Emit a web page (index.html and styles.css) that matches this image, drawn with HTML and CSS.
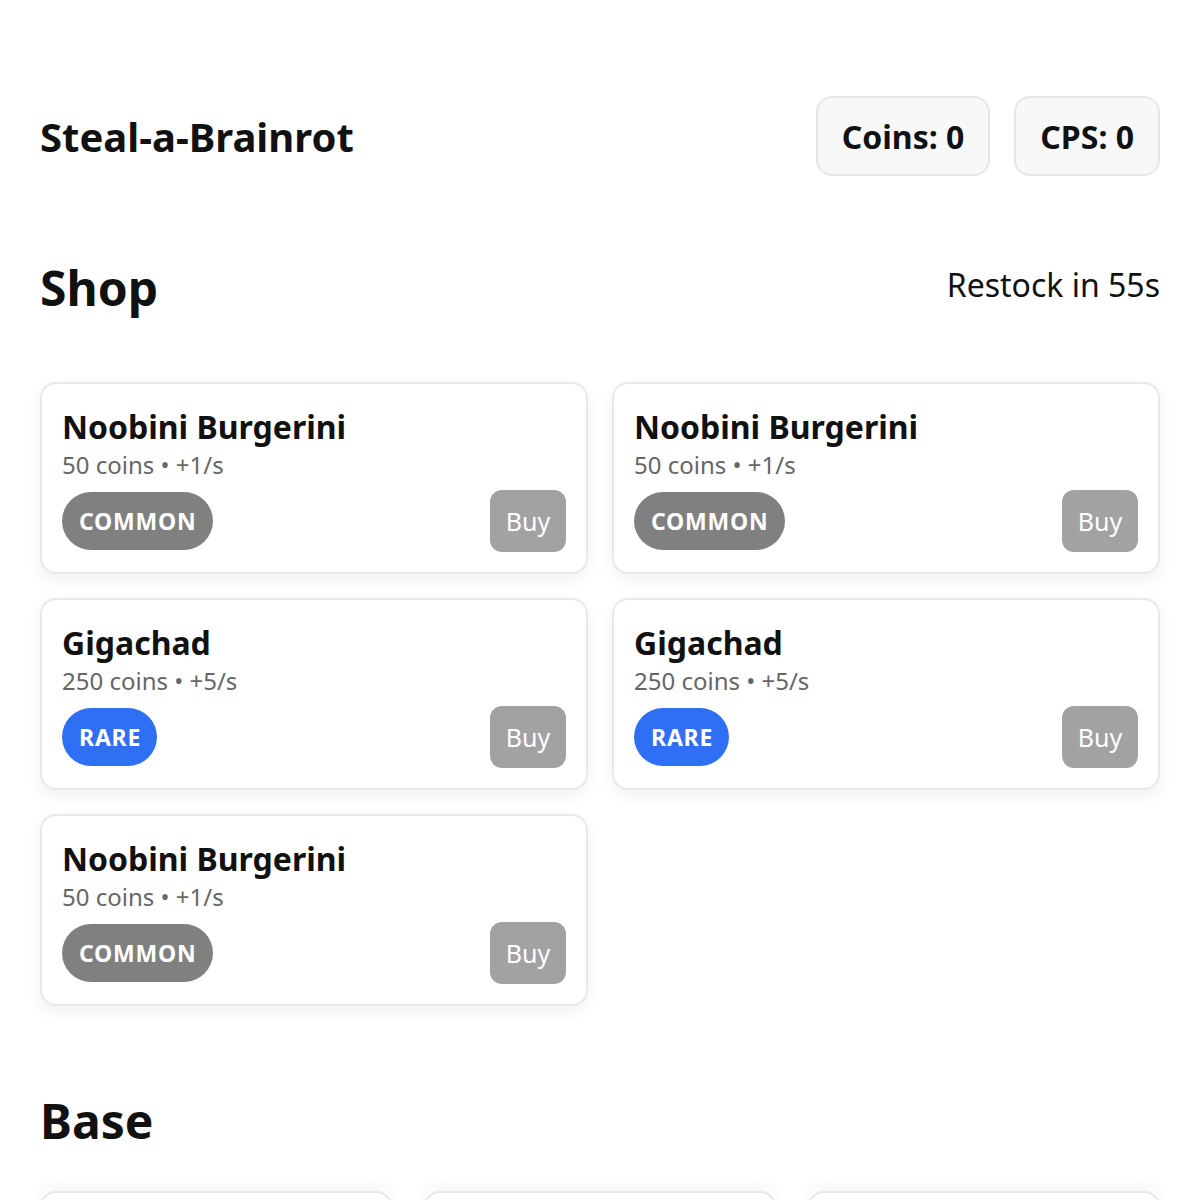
FILE: index.html
```html
<!DOCTYPE html>
<html>
<head>
<meta charset="utf-8">
<link rel="stylesheet" href="styles.css">
</head>
<body>
<div class="page">
  <header class="topbar">
    <h1 class="brand">Steal-a-Brainrot</h1>
    <div class="stats">
      <div class="stat">Coins: 0</div>
      <div class="stat">CPS: 0</div>
    </div>
  </header>

  <section class="section">
    <div class="section-head">
      <h2 class="section-title">Shop</h2>
      <div class="restock">Restock in 55s</div>
    </div>
    <div class="shop-grid">
      <div class="card">
        <div class="card-name">Noobini Burgerini</div>
        <div class="card-meta">50 coins • +1/s</div>
        <div class="card-row">
          <span class="badge badge-common">COMMON</span>
          <button class="buy">Buy</button>
        </div>
      </div>
      <div class="card">
        <div class="card-name">Noobini Burgerini</div>
        <div class="card-meta">50 coins • +1/s</div>
        <div class="card-row">
          <span class="badge badge-common">COMMON</span>
          <button class="buy">Buy</button>
        </div>
      </div>
      <div class="card">
        <div class="card-name">Gigachad</div>
        <div class="card-meta">250 coins • +5/s</div>
        <div class="card-row">
          <span class="badge badge-rare">RARE</span>
          <button class="buy">Buy</button>
        </div>
      </div>
      <div class="card">
        <div class="card-name">Gigachad</div>
        <div class="card-meta">250 coins • +5/s</div>
        <div class="card-row">
          <span class="badge badge-rare">RARE</span>
          <button class="buy">Buy</button>
        </div>
      </div>
      <div class="card">
        <div class="card-name">Noobini Burgerini</div>
        <div class="card-meta">50 coins • +1/s</div>
        <div class="card-row">
          <span class="badge badge-common">COMMON</span>
          <button class="buy">Buy</button>
        </div>
      </div>
    </div>
  </section>

  <section class="section base">
    <div class="section-head">
      <h2 class="section-title">Base</h2>
    </div>
    <div class="base-grid">
      <div class="slot"></div>
      <div class="slot"></div>
      <div class="slot"></div>
    </div>
  </section>
</div>
</body>
</html>
```

FILE: styles.css
```css
* { box-sizing: border-box; }
html, body { margin: 0; padding: 0; background: #fff; }
body {
  font-family: "Noto Sans", "Open Sans", sans-serif;
  color: #111;
}
.page {
  padding: 96px 40px 0;
}
.topbar {
  display: flex;
  align-items: center;
  justify-content: space-between;
  height: 80px;
}
.brand {
  margin: 0;
  font-size: 40px;
  font-weight: 700;
  letter-spacing: 0;
}
.stats {
  display: flex;
  gap: 24px;
}
.stat {
  height: 80px;
  padding: 0 24px;
  display: flex;
  align-items: center;
  border: 2px solid #e6e6e6;
  background: #f8f8f8;
  border-radius: 16px;
  font-size: 32px;
  font-weight: 700;
}
.section-head {
  display: flex;
  align-items: center;
  justify-content: space-between;
  margin-top: 78px;
  height: 66px;
}
.section-title {
  margin: 0;
  font-size: 48px;
  font-weight: 700;
}
.restock {
  font-size: 32px;
  margin-top: -6px;
}
.shop-grid {
  margin-top: 62px;
  display: grid;
  grid-template-columns: 1fr 1fr;
  gap: 24px;
}
.card {
  background: #fff;
  border: 2px solid #e8e8e8;
  border-radius: 16px;
  box-shadow: 0 6px 16px rgba(0,0,0,0.06);
  padding: 23px 20px 20px;
  height: 192px;
}
.card-name {
  font-size: 32px;
  font-weight: 700;
  line-height: 40px;
}
.card-meta {
  font-size: 24px;
  color: #666;
  line-height: 34px;
  margin-top: 1px;
}
.card-row {
  display: flex;
  align-items: center;
  justify-content: space-between;
  margin-top: 8px;
}
.badge {
  display: inline-flex;
  align-items: center;
  height: 58px;
  padding: 0 16px 0 17px;
  border-radius: 29px;
  color: #fff;
  font-size: 23px;
  font-weight: 700;
  letter-spacing: 0.8px;
}
.badge-common { background: #808080; }
.badge-rare { background: #2f6ff4; }
.buy {
  height: 62px;
  width: 76px;
  border: none;
  border-radius: 12px;
  background: #a2a2a2;
  color: #fff;
  font-family: inherit;
  font-size: 25px;
  padding: 0;
}
.base .section-head { margin-top: 81px; }
.base-grid {
  margin-top: 38px;
  display: grid;
  grid-template-columns: repeat(3, 1fr);
  gap: 32px;
}
.slot {
  height: 180px;
  background: #fff;
  border: 2px solid #e8e8e8;
  border-radius: 16px;
  box-shadow: 0 -6px 16px rgba(0,0,0,0.04);
}
```
